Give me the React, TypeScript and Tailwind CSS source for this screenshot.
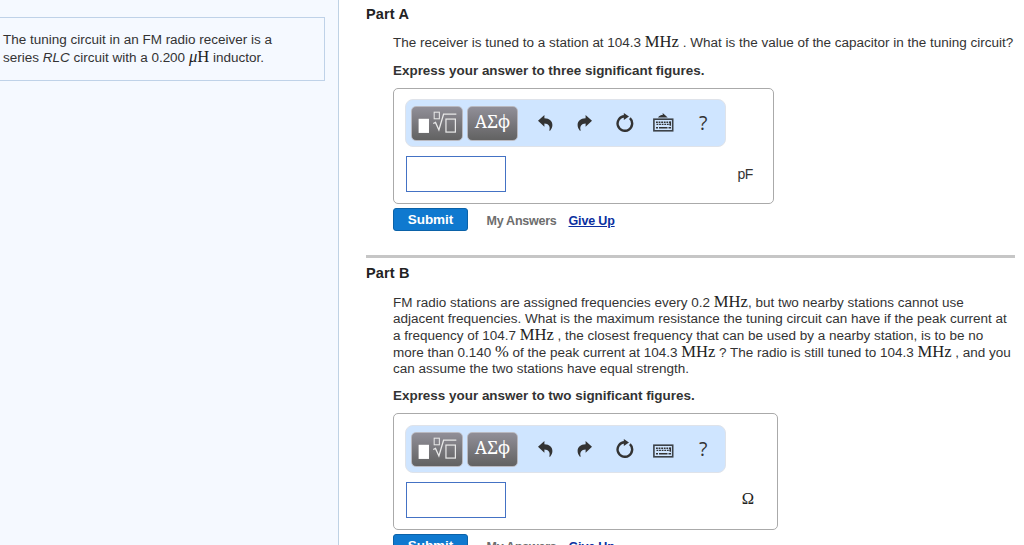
import type { ReactNode } from "react";

function Unit({ children, className = "" }: { children: ReactNode; className?: string }) {
  return (
    <span
      className={`font-['Liberation_Serif',serif] text-[16.6px] leading-none text-[#222] ${className}`}
    >
      {children}
    </span>
  );
}

function Line({ children, className = "" }: { children: ReactNode; className?: string }) {
  return <span className={`block h-[16.7px] whitespace-pre ${className}`}>{children}</span>;
}

function TemplateIcon() {
  return (
    <svg viewBox="0 0 52 35" className="h-full w-full" fill="none" stroke="#e8e8e8">
      <rect x="6.5" y="12.5" width="11" height="15" fill="#fff" stroke="none" />
      <rect x="23" y="5.5" width="5.5" height="7" strokeWidth="1.1" />
      <path d="M22 17.5l2.4-1.2 3.6 8L33 7.5h13.5" strokeWidth="1.4" />
      <rect x="35.5" y="12.8" width="10" height="13.8" strokeWidth="1.3" />
    </svg>
  );
}

function UndoIcon({ className = "" }: { className?: string }) {
  return (
    <svg viewBox="0 0 15 16" className={`h-4 w-[15px] ${className}`} fill="#333">
      <path d="M0 5.8L6.4 0v3.3c5.2.2 8 2.8 8 6.8 0 2-.8 4.1-2.3 5.6-.7.2-1 0-.7-.6 1-3.8-.7-6.4-5-6.6v3.2z" />
    </svg>
  );
}

function ResetIcon() {
  return (
    <svg viewBox="0 0 18 19" className="h-[19px] w-[18px]" fill="none">
      <path d="M13.9 5.2a7.3 7.3 0 1 1-5.4-2" stroke="#333" strokeWidth="2.4" />
      <path d="M7.8 0l5.2 3.4L7.8 7z" fill="#333" />
    </svg>
  );
}

function KeyboardIcon({ caret }: { caret: boolean }) {
  return (
    <svg viewBox="0 0 21 19" className="h-[19px] w-[21px]" fill="none">
      {caret && <path d="M5 4.4C6 2.6 8.5 2 9.7 2V0l5 4.4z" fill="#333" />}
      <rect x=".9" y="6.2" width="18.8" height="11.6" stroke="#3c4248" strokeWidth="1.6" />
      <path d="M3 9.2h14.5M3.5 11.4h13.5" stroke="#333" strokeWidth="1.4" strokeDasharray="1.8 .8" />
      <path d="M17.3 8.5v4.3" stroke="#333" strokeWidth="1.4" />
      <path d="M3 14.8h2M6 14.8h8.5M15.5 14.8H18" stroke="#333" strokeWidth="1.4" />
    </svg>
  );
}

const toolButton =
  "flex items-center justify-center rounded-[5px] border border-[#b9b9c0] bg-linear-to-b from-[#918f98] to-[#626262]";

function Toolbar({ caret }: { caret: boolean }) {
  return (
    <div className="flex h-12 w-[321px] shrink-0 items-start rounded-lg border border-[#dfe3ea] bg-[#cfe5ff] pt-[6px] pl-[5px]">
      <button aria-label="Templates" className={`${toolButton} h-[35px] w-[52px]`}>
        <TemplateIcon />
      </button>
      <button
        className={`${toolButton} ml-1 h-[35px] w-[51px] pb-[3px] font-['Noto_Serif','Liberation_Serif',serif] text-[17.5px] leading-none text-white`}
      >
        ΑΣϕ
      </button>
      <button aria-label="Undo" className="mt-[9px] ml-[19.5px]">
        <UndoIcon />
      </button>
      <button aria-label="Redo" className="mt-[9px] ml-6">
        <UndoIcon className="-scale-x-100" />
      </button>
      <button aria-label="Reset" className="mt-[7px] ml-6">
        <ResetIcon />
      </button>
      <button aria-label="Keyboard shortcuts" className="mt-[7px] ml-[19.5px]">
        <KeyboardIcon caret={caret} />
      </button>
      <button
        aria-label="Help"
        className="mt-[7px] ml-[25px] font-['Open_Sans','Noto_Sans',sans-serif] text-[19.5px] leading-5 text-[#333]"
      >
        ?
      </button>
    </div>
  );
}

function AnswerBox({
  unit,
  caret = false,
  className,
}: {
  unit: ReactNode;
  caret?: boolean;
  className: string;
}) {
  return (
    <div className={`flex flex-col rounded-[5px] border border-[#aaa] pl-[11px] ${className}`}>
      <Toolbar caret={caret} />
      <div className="mt-[9px] flex h-9 items-center justify-between pl-px">
        <input
          aria-label="Answer"
          className="h-9 w-[100px] border border-[#4472c4] bg-white px-1 outline-none"
        />
        {unit}
      </div>
    </div>
  );
}

function Actions() {
  return (
    <div className="mt-1 flex h-[23px] items-center font-bold">
      <button className="h-[23px] w-[75px] rounded-[3px] border border-[#0b62a8] bg-[#0f79cf] pt-px text-[13.5px] leading-none tracking-[-.05px] text-white">
        Submit
      </button>
      <span className="ml-[18.5px] pt-[3px] text-[12.5px] tracking-[-.25px] text-[#6d6d6d]">
        My Answers
      </span>
      <a
        href="#"
        className="ml-3 pt-[3px] text-[12.5px] tracking-[-.15px] text-[#0a2fa0] underline"
      >
        Give Up
      </a>
    </div>
  );
}

export default function App() {
  return (
    <div className="flex h-[545px] w-[1024px] overflow-hidden bg-white font-['Liberation_Sans',Arial,sans-serif] text-[13.49px] leading-[16.7px] text-[#333]">
      <aside className="w-[339px] shrink-0 border-r border-[#bfd2e4] bg-[#f5f9ff] pt-[17px]">
        <div className="h-16 w-[325px] border border-l-0 border-[#bfd2e8] pt-[14px] pl-[3px]">
          <Line className="h-[15.5px]">The tuning circuit in an FM radio receiver is a</Line>
          <Line>
            series <i>RLC</i> circuit with a 0.200 <Unit><i>μ</i>H</Unit> inductor.
          </Line>
        </div>
      </aside>
      <main className="flex-1 pl-[27px]">
        <section className="h-[255px] pt-[5px]">
          <h2 className="text-[14.5px] leading-[18px] font-bold tracking-[.15px] text-[#222]">
            Part A
          </h2>
          <div className="pl-[27px]">
            <p className="mt-[11px]">
              <Line>
                The receiver is tuned to a station at 104.3 <Unit>MHz</Unit> . What is the value of
                the capacitor in the tuning circuit?
              </Line>
            </p>
            <p className="mt-[12px] h-[25.3px] text-[13.45px] font-bold whitespace-pre">
              Express your answer to three significant figures.
            </p>
            <AnswerBox
              caret
              className="h-[116px] w-[381px] pt-[10px]"
              unit={<span className="mr-5 text-[14px] tracking-[-.4px]">pF</span>}
            />
            <Actions />
          </div>
        </section>
        <section className="w-[649px] border-t-[3px] border-[#c6c6c6] pt-[6px]">
          <h2 className="text-[14.5px] leading-[18px] font-bold tracking-[.15px] text-[#222]">
            Part B
          </h2>
          <div className="pl-[27px]">
            <p className="mt-[12px]">
              <Line>
                FM radio stations are assigned frequencies every 0.2 <Unit>MHz</Unit>, but two
                nearby stations cannot use
              </Line>
              <Line>
                adjacent frequencies. What is the maximum resistance the tuning circuit can have if
                the peak current at
              </Line>
              <Line>
                a frequency of 104.7 <Unit>MHz</Unit> , the closest frequency that can be used by a
                nearby station, is to be no
              </Line>
              <Line>
                more than 0.140 <Unit>%</Unit> of the peak current at 104.3 <Unit>MHz</Unit> ? The
                radio is still tuned to 104.3 <Unit>MHz</Unit> , and you
              </Line>
              <Line>can assume the two stations have equal strength.</Line>
            </p>
            <p className="mt-[10.5px] h-[25px] text-[13.45px] font-bold whitespace-pre">
              Express your answer to two significant figures.
            </p>
            <AnswerBox
              className="h-[117px] w-[385px] pt-[11px]"
              unit={<Unit className="mr-[23px] -mt-0.5">Ω</Unit>}
            />
            <Actions />
          </div>
        </section>
      </main>
    </div>
  );
}
